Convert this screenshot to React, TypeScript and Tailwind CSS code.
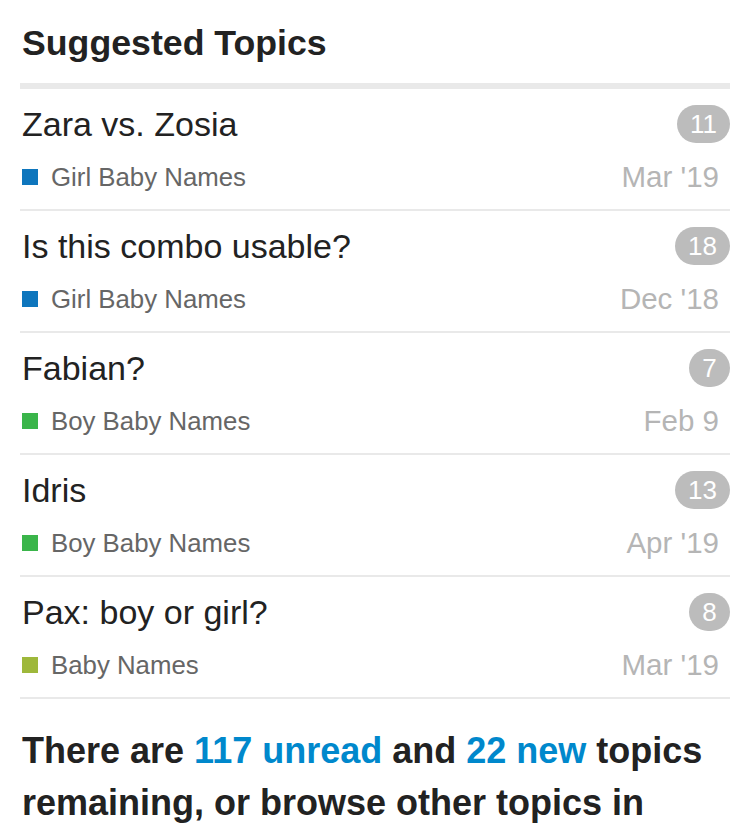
import React from "react";

type Topic = {
  title: string;
  count: number;
  category: string;
  color: string;
  date: string;
};

const topics: Topic[] = [
  { title: "Zara vs. Zosia", count: 11, category: "Girl Baby Names", color: "bg-[#0e76bd]", date: "Mar '19" },
  { title: "Is this combo usable?", count: 18, category: "Girl Baby Names", color: "bg-[#0e76bd]", date: "Dec '18" },
  { title: "Fabian?", count: 7, category: "Boy Baby Names", color: "bg-[#3ab54a]", date: "Feb 9" },
  { title: "Idris", count: 13, category: "Boy Baby Names", color: "bg-[#3ab54a]", date: "Apr '19" },
  { title: "Pax: boy or girl?", count: 8, category: "Baby Names", color: "bg-[#9eb83b]", date: "Mar '19" },
];

export default function App() {
  return (
    <div
      className="w-[750px] h-[835px] overflow-hidden bg-white px-[20px]"
      style={{ fontFamily: '"Liberation Sans", Arial, Helvetica, sans-serif' }}
    >
      <h2 className="pt-[21px] pl-[2px] text-[35.7px] leading-[44px] font-bold text-[#222222]">
        Suggested Topics
      </h2>
      <div className="mt-[18px] h-[6px] bg-[#e9e9e9]" />
      <div className="flex flex-col">
        {topics.map((t) => (
          <div key={t.title} className="h-[122px] border-b-2 border-[#e9e9e9] pt-[15px] pl-[2px]">
            <div className="flex h-[40px] items-center justify-between">
              <span className="text-[34px] leading-[40px] text-[#222222]">{t.title}</span>
              <span className="flex h-[38px] min-w-[41px] items-center justify-center rounded-full bg-[#bcbcbc] px-[13px] text-[26px] leading-none text-white">
                {t.count}
              </span>
            </div>
            <div className="mt-[17px] flex h-[32px] items-center justify-between pr-[11px]">
              <div className="flex items-center gap-[13px]">
                <span className={`inline-block h-[16px] w-[16px] ${t.color}`} />
                <span className="text-[25.8px] leading-[32px] text-[#666666]">{t.category}</span>
              </div>
              <span className="text-[29.5px] leading-[32px] text-[#b5b5b5]">{t.date}</span>
            </div>
          </div>
        ))}
      </div>
      <p className="mt-[26px] pl-[2px] text-[36px] leading-[52px] font-bold text-[#222222]">
        There are <span className="text-[#0088cc]">117 unread</span> and{" "}
        <span className="text-[#0088cc]">22 new</span> topics remaining, or browse other topics in
      </p>
    </div>
  );
}
